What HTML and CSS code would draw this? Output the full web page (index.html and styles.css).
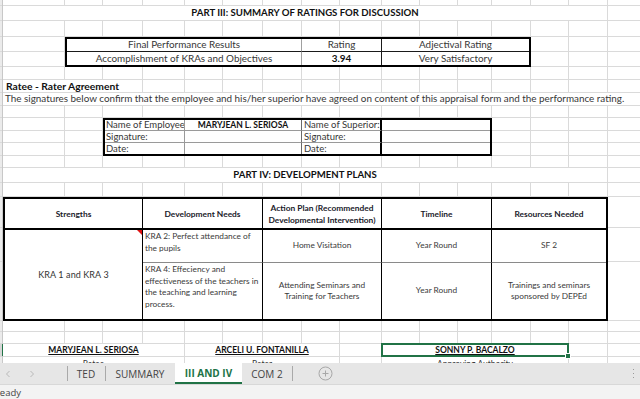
FILE: index.html
```html
<!DOCTYPE html>
<html lang="en">
<head>
<meta charset="utf-8">
<title>III AND IV</title>
<link rel="stylesheet" href="styles.css">
</head>
<body>
<div class="app">
  <div class="sheet">
    <div class="grid">
      <div class="rowsel"></div>

      <div class="cell title part3">PART III: SUMMARY OF RATINGS FOR DISCUSSION</div>

      <div class="rating">
        <div class="rc ra top">Final Performance Results</div>
        <div class="rc rb top">Rating</div>
        <div class="rc rr top">Adjectival Rating</div>
        <div class="rc ra">Accomplishment of KRAs and Objectives</div>
        <div class="rc rb strong">3.94</div>
        <div class="rc rr">Very Satisfactory</div>
      </div>

      <div class="cell left ratee strong">Ratee - Rater Agreement</div>
      <div class="cell left sigtext">The signatures below confirm that the employee and his/her superior have agreed on content of this appraisal form and the performance rating.</div>

      <div class="sig">
        <div class="sc s1 top">Name of Employee</div>
        <div class="sc s2 top strong center emp">MARYJEAN L. SERIOSA</div>
        <div class="sc s3 top">Name of Superior:</div>
        <div class="sc s4 top"></div>
        <div class="sc s1 top">Signature:</div>
        <div class="sc s2 top"></div>
        <div class="sc s3 top">Signature:</div>
        <div class="sc s4 top"></div>
        <div class="sc s1">Date:</div>
        <div class="sc s2"></div>
        <div class="sc s3">Date:</div>
        <div class="sc s4"></div>
      </div>

      <div class="cell title part4">PART IV: DEVELOPMENT PLANS</div>

      <div class="dev">
        <div class="dh">Strengths</div>
        <div class="dh">Development Needs</div>
        <div class="dh">Action Plan (Recommended<br>Developmental Intervention)</div>
        <div class="dh">Timeline</div>
        <div class="dh end">Resources Needed</div>

        <div class="dc strength">KRA 1 and KRA 3<span class="comment"></span></div>
        <div class="dc need r1">KRA 2: Perfect attendance of<br>the pupils</div>
        <div class="dc r1">Home Visitation</div>
        <div class="dc r1">Year Round</div>
        <div class="dc r1 end">SF 2</div>

        <div class="dc need">KRA 4: Effeciency and<br>effectiveness of the teachers in<br>the teaching and learning<br>process.</div>
        <div class="dc">Attending Seminars and<br>Training for Teachers</div>
        <div class="dc">Year Round</div>
        <div class="dc end">Trainings and seminars<br>sponsored by DEPEd</div>
      </div>

      <div class="cell name n1">MARYJEAN L. SERIOSA</div>
      <div class="cell name n2">ARCELI U. FONTANILLA</div>
      <div class="cell name n3 selected">SONNY P. BACALZO<span class="handle"></span></div>

      <div class="cell role n1 below">Ratee</div>
      <div class="cell role n2 below">Rater</div>
      <div class="cell role n3 below">Approving Authority</div>
    </div>
  </div>

  <div class="tabs">
    <div class="nav">
      <svg class="arrow" width="6" height="8" viewBox="0 0 6 8"><polyline points="4.5,1 1.5,4 4.5,7" fill="none" stroke="#b9b9b9" stroke-width="1"/></svg>
      <svg class="arrow" width="6" height="8" viewBox="0 0 6 8"><polyline points="1.5,1 4.5,4 1.5,7" fill="none" stroke="#b9b9b9" stroke-width="1"/></svg>
    </div>
    <div class="tab sep t-ted">TED</div>
    <div class="tab sep t-sum">SUMMARY</div>
    <div class="tab active">III AND IV</div>
    <div class="tab t-com">COM 2</div>
    <div class="add">
      <svg width="15" height="15" viewBox="0 0 15 15"><circle cx="7.5" cy="7.5" r="6.5" fill="none" stroke="#a8a8a8" stroke-width="1"/><path d="M7.5 4.5v6M4.5 7.5h6" stroke="#a8a8a8" stroke-width="1"/></svg>
    </div>
    <div class="spacer"></div>
    <div class="more">
      <svg width="3" height="12" viewBox="0 0 3 12"><rect x="1" y="1" width="1" height="1" fill="#9a9a9a"/><rect x="1" y="5" width="1" height="1" fill="#9a9a9a"/><rect x="1" y="9" width="1" height="1" fill="#9a9a9a"/></svg>
    </div>
  </div>

  <div class="status"><span class="ready">Ready</span></div>
</div>
</body>
</html>
```

FILE: styles.css
```css
* { box-sizing: border-box; margin: 0; padding: 0; }

html, body {
  width: 640px;
  height: 399px;
  overflow: hidden;
  background: #fff;
}

body {
  font-family: Lato, "Open Sans", sans-serif;
  color: #363636;
  font-size: 9.9px;
}

.app {
  display: flex;
  flex-direction: column;
  width: 640px;
  height: 399px;
}

.sheet {
  flex: none;
  height: 363px;
  overflow: hidden;
}

.grid {
  --g: #dadada;
  display: grid;
  width: 648px;
  grid-template-columns: 3px 62px 38px 40px 42px 38px 40px 39px 38px 42px 38px 38px 34px 39px 38px 39px 40px;
  grid-template-rows: 6px 15px 16px 15px 15px 13px 13px 13px 12px 13px 12px 13px 12px 15px 14px 31px 34px 59px 11px 12px 13px 13px;
  background:
    linear-gradient(#c8c8c8, #c8c8c8) 2px 0 / 1px 100% no-repeat,
    linear-gradient(var(--g), var(--g)) 64px 0 / 1px 100% no-repeat,
    linear-gradient(var(--g), var(--g)) 102px 0 / 1px 100% no-repeat,
    linear-gradient(var(--g), var(--g)) 142px 0 / 1px 100% no-repeat,
    linear-gradient(var(--g), var(--g)) 184px 0 / 1px 100% no-repeat,
    linear-gradient(var(--g), var(--g)) 222px 0 / 1px 100% no-repeat,
    linear-gradient(var(--g), var(--g)) 262px 0 / 1px 100% no-repeat,
    linear-gradient(var(--g), var(--g)) 301px 0 / 1px 100% no-repeat,
    linear-gradient(var(--g), var(--g)) 339px 0 / 1px 100% no-repeat,
    linear-gradient(var(--g), var(--g)) 381px 0 / 1px 100% no-repeat,
    linear-gradient(var(--g), var(--g)) 419px 0 / 1px 100% no-repeat,
    linear-gradient(var(--g), var(--g)) 457px 0 / 1px 100% no-repeat,
    linear-gradient(var(--g), var(--g)) 491px 0 / 1px 100% no-repeat,
    linear-gradient(var(--g), var(--g)) 530px 0 / 1px 100% no-repeat,
    linear-gradient(var(--g), var(--g)) 568px 0 / 1px 100% no-repeat,
    linear-gradient(var(--g), var(--g)) 607px 0 / 1px 100% no-repeat,
    linear-gradient(var(--g), var(--g)) 647px 0 / 1px 100% no-repeat,
    linear-gradient(var(--g), var(--g)) 0 5px / 100% 1px no-repeat,
    linear-gradient(var(--g), var(--g)) 0 20px / 100% 1px no-repeat,
    linear-gradient(var(--g), var(--g)) 0 36px / 100% 1px no-repeat,
    linear-gradient(var(--g), var(--g)) 0 51px / 100% 1px no-repeat,
    linear-gradient(var(--g), var(--g)) 0 66px / 100% 1px no-repeat,
    linear-gradient(var(--g), var(--g)) 0 79px / 100% 1px no-repeat,
    linear-gradient(var(--g), var(--g)) 0 92px / 100% 1px no-repeat,
    linear-gradient(var(--g), var(--g)) 0 105px / 100% 1px no-repeat,
    linear-gradient(var(--g), var(--g)) 0 117px / 100% 1px no-repeat,
    linear-gradient(var(--g), var(--g)) 0 130px / 100% 1px no-repeat,
    linear-gradient(var(--g), var(--g)) 0 142px / 100% 1px no-repeat,
    linear-gradient(var(--g), var(--g)) 0 155px / 100% 1px no-repeat,
    linear-gradient(var(--g), var(--g)) 0 167px / 100% 1px no-repeat,
    linear-gradient(var(--g), var(--g)) 0 182px / 100% 1px no-repeat,
    linear-gradient(var(--g), var(--g)) 0 196px / 100% 1px no-repeat,
    linear-gradient(var(--g), var(--g)) 0 227px / 100% 1px no-repeat,
    linear-gradient(var(--g), var(--g)) 0 261px / 100% 1px no-repeat,
    linear-gradient(var(--g), var(--g)) 0 320px / 100% 1px no-repeat,
    linear-gradient(var(--g), var(--g)) 0 331px / 100% 1px no-repeat,
    linear-gradient(var(--g), var(--g)) 0 343px / 100% 1px no-repeat,
    linear-gradient(var(--g), var(--g)) 0 356px / 100% 1px no-repeat,
    linear-gradient(var(--g), var(--g)) 0 369px / 100% 1px no-repeat,
    linear-gradient(#ebebeb, #ebebeb) 0 0 / 2px 100% no-repeat,
    #fff;
}

/* generic cell covering merged area, leaving its right/bottom gridline */
.cell {
  background: #fff;
  margin: 0 1px 1px 0;
  display: flex;
  align-items: center;
  justify-content: center;
  white-space: nowrap;
  line-height: 1;
}

.left { justify-content: flex-start; }
.center { justify-content: center; }
.strong { font-weight: 700; color: #111; }

.rowsel {
  grid-column: 1;
  grid-row: 21;
  background: #d6d6d6;
  border-right: 1px solid #217346;
  margin-bottom: 1px;
}

.title {
  font-weight: 700;
  color: #111;
  font-size: 9.6px;
}
.part3 { grid-column: 2 / 17; grid-row: 2; }
.part4 { grid-column: 2 / 17; grid-row: 14; }

/* Part III rating table */
.rating {
  grid-column: 3 / 15;
  grid-row: 4 / 6;
  border: 2px solid #000;
  background: #fff;
  display: grid;
  grid-template-columns: 235px 80px 1fr;
  grid-template-rows: 13px 1fr;
}
.rc {
  display: flex;
  align-items: center;
  justify-content: center;
  white-space: nowrap;
  line-height: 1;
}
.rc.top { border-bottom: 1px solid #1a1a1a; }
.ra { border-right: 1px solid #a0a0a0; }
.rb { border-right: 1px solid #1a1a1a; }

.ratee { grid-column: 2 / 5; grid-row: 7; padding-left: 3px; font-size: 10.3px; }
.sigtext { grid-column: 2 / 18; grid-row: 8; padding-left: 2px; margin-right: 0; }

/* signature table */
.sig {
  grid-column: 4 / 14;
  grid-row: 10 / 13;
  border: 2px solid #000;
  background: #fff;
  display: grid;
  grid-template-columns: 80px 117px 80px 1fr;
  grid-template-rows: 11px 12px 1fr;
  font-size: 9.5px;
}
.sc {
  display: flex;
  align-items: center;
  white-space: nowrap;
  overflow: hidden;
  line-height: 1;
  padding-left: 1px;
}
.sc.top { border-bottom: 1px solid #9a9a9a; }
.s1 { border-right: 1px solid #9a9a9a; }
.s2 { border-right: 1px solid #6a6a6a; padding-left: 0; }
.s3 { border-right: 2px solid #000; padding-left: 2px; }
.emp { font-size: 8.5px; }

/* development plans table */
.dev {
  grid-column: 2 / 17;
  grid-row: 16 / 19;
  border: 2px solid #000;
  background: #fff;
  display: grid;
  grid-template-columns: 138px 120px 119px 110px 1fr;
  grid-template-rows: 31px 33px 1fr;
  font-size: 8.3px;
}
.dh {
  border-bottom: 2px solid #000;
  border-right: 1px solid #000;
  display: flex;
  align-items: center;
  justify-content: center;
  text-align: center;
  font-weight: 700;
  color: #1a1a2a;
  line-height: 12px;
  font-size: 8.4px;
}
.dc {
  border-right: 1px solid #000;
  display: flex;
  align-items: center;
  justify-content: center;
  text-align: center;
  line-height: 11.5px;
  color: #3a3a3a;
}
.end { border-right: none; }
.dc.r1 { border-bottom: 1px solid #8a8a8a; }
.strength {
  grid-row: 2 / 4;
  position: relative;
  font-size: 9px;
  letter-spacing: 0.1px;
  color: #333;
}
.comment {
  position: absolute;
  top: 0;
  right: 0;
  width: 0;
  height: 0;
  border-top: 5px solid #e01010;
  border-left: 5px solid transparent;
}
.need {
  justify-content: flex-start;
  align-items: flex-start;
  text-align: left;
  padding: 1px 0 0 2px;
}

/* signatories */
.name {
  grid-row: 21;
  font-weight: 700;
  color: #111;
  text-decoration: underline;
  font-size: 8.5px;
}
.below { grid-row: 22; }
.role { font-size: 8.5px; align-items: flex-start; padding-top: 3px; }
.n1 { grid-column: 2 / 6; }
.n2 { grid-column: 6 / 10; }
.n3 { grid-column: 11 / 16; }
.selected {
  position: relative;
  margin: -1px 0 0 -1px;
  border: 2px solid #217346;
}
.handle {
  position: absolute;
  right: -4px;
  bottom: -4px;
  width: 6px;
  height: 6px;
  background: #217346;
  border: 1px solid #fff;
}

/* sheet tabs */
.tabs {
  flex: none;
  height: 21px;
  background: #e6e6e6;
  display: flex;
  align-items: stretch;
  font-family: "Open Sans", "Noto Sans", sans-serif;
  font-size: 10px;
  color: #444;
}
.nav {
  width: 67px;
  display: flex;
  align-items: center;
  gap: 18px;
  padding-left: 5px;
}
.tab {
  display: flex;
  align-items: center;
  justify-content: center;
  white-space: nowrap;
  position: relative;
}
.sep::before {
  content: "";
  position: absolute;
  left: 0;
  top: 3px;
  bottom: 3px;
  width: 1px;
  background: #a9a9a9;
}
.t-ted { width: 38px; }
.t-sum { width: 70px; }
.active {
  width: 67px;
  background: #fff;
  color: #217346;
  font-weight: 700;
  border-bottom: 2px solid #217346;
}
.t-com { width: 51px; border-right: 1px solid #a9a9a9; margin: 3px 0; }
.add {
  width: 64px;
  display: flex;
  align-items: center;
  justify-content: center;
}
.spacer { flex: 1; }
.more {
  width: 14px;
  display: flex;
  align-items: center;
  justify-content: center;
}

.status {
  flex: 1;
  background: #f3f3f3;
  border-top: 1px solid #d8d8d8;
  display: flex;
  align-items: center;
  font-family: "Open Sans", "Noto Sans", sans-serif;
  font-size: 9.5px;
  color: #444;
  overflow: hidden;
}
.ready { text-indent: -6px; display: block; }
```
